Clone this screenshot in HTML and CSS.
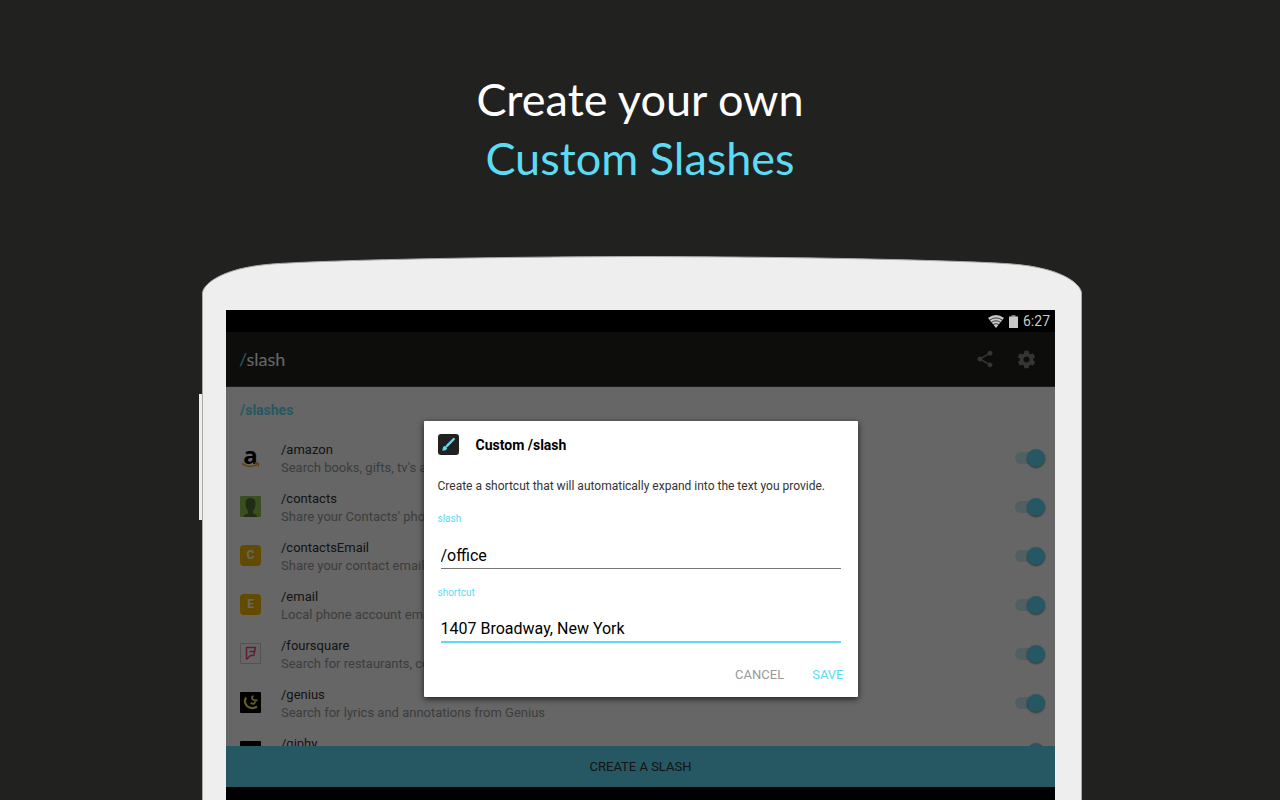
FILE: index.html
```html
<!DOCTYPE html>
<html lang="en">
<head>
  <meta charset="UTF-8">
  <meta name="viewport" content="width=device-width, initial-scale=1.0">
  <title>/slash - Custom Slashes</title>
  <link rel="stylesheet" href="styles.css">
</head>
<body>
  <h1>Create your own<br><span class="accent">Custom Slashes</span></h1>

  <div class="tablet">
    <div class="side-button"></div>
    <svg class="tablet-top" viewBox="0 0 880 54" preserveAspectRatio="none">
      <path fill="#eee" stroke="#aaa" d="M0.5 55V37C1 29 18 12 70 8C110 5 250 1 440 0.5C630 1 770 5 810 8C862 12 879 29 879.5 37V55"/>
    </svg>

    <div class="tablet-body">
    <div class="screen">
      <div class="status-bar">
        <svg width="16" height="13" viewBox="0 0 16 13">
          <path fill="#c8c8c8" d="M0 3Q8-3 16 3L8 13Z"/>
          <path fill="none" stroke="#000" stroke-width=".7" d="M1.5 5.2Q8 .6 14.5 5.2M3.3 7.5Q8 4 12.7 7.5M5 9.6Q8 7.6 11 9.6"/>
        </svg>
        <svg width="9" height="13" viewBox="0 0 9 13">
          <path fill="#777" d="M2.5 0h4v2h-4z"/>
          <path fill="#c8c8c8" d="M0 1.5h9V13H0z"/>
        </svg>
        <span>6:27</span>
      </div>

      <div class="app">
        <header class="app-bar">
          <h2><span class="accent">/</span>slash</h2>
          <button class="icon-button" aria-label="Share">
            <svg width="20" height="20" viewBox="0 0 24 24"><path fill="#858585" d="M18 16.08c-.76 0-1.44.3-1.96.77L8.91 12.7c.05-.23.09-.46.09-.7s-.04-.47-.09-.7l7.05-4.11c.54.5 1.25.81 2.04.81 1.66 0 3-1.34 3-3s-1.34-3-3-3-3 1.34-3 3c0 .24.04.47.09.7L8.04 9.81C7.5 9.31 6.79 9 6 9c-1.66 0-3 1.34-3 3s1.34 3 3 3c.79 0 1.5-.31 2.04-.81l7.12 4.16c-.05.21-.08.43-.08.65 0 1.61 1.31 2.92 2.92 2.92s2.92-1.31 2.92-2.92-1.31-2.92-2.92-2.92z"/></svg>
          </button>
          <button class="icon-button" aria-label="Settings">
            <svg width="21" height="21" viewBox="0 0 24 24"><path fill="#858585" d="M19.43 12.98c.04-.32.07-.64.07-.98s-.03-.66-.07-.98l2.11-1.65c.19-.15.24-.42.12-.64l-2-3.46c-.12-.22-.39-.3-.61-.22l-2.49 1c-.52-.4-1.08-.73-1.69-.98l-.38-2.65C14.46 2.18 14.25 2 14 2h-4c-.25 0-.46.18-.49.42l-.38 2.65c-.61.25-1.17.59-1.69.98l-2.49-1c-.23-.09-.49 0-.61.22l-2 3.46c-.13.22-.07.49.12.64l2.11 1.65c-.04.32-.07.65-.07.98s.03.66.07.98l-2.11 1.65c-.19.15-.24.42-.12.64l2 3.46c.12.22.39.3.61.22l2.49-1c.52.4 1.08.73 1.69.98l.38 2.65c.03.24.24.42.49.42h4c.25 0 .46-.18.49-.42l.38-2.65c.61-.25 1.17-.59 1.69-.98l2.49 1c.23.09.49 0 .61-.22l2-3.46c.12-.22.07-.49-.12-.64l-2.11-1.65zM12 15.5c-1.93 0-3.5-1.57-3.5-3.5s1.57-3.5 3.5-3.5 3.5 1.57 3.5 3.5-1.57 3.5-3.5 3.5z"/></svg>
          </button>
        </header>

        <main class="list">
          <h3>/slashes</h3>
          <label class="row">
            <span class="icon amazon">a<svg width="19" height="6" viewBox="0 0 19 6"><path fill="none" stroke="#f90" stroke-width="1.5" d="M1 1.5Q8 7 16 2.5M13.5 1.2Q19 0 17 4.5"/></svg></span>
            <span class="text"><b>/amazon</b><small>Search books, gifts, tv's and more</small></span>
            <input type="checkbox" checked>
          </label>
          <label class="row">
            <span class="icon contacts"><svg width="21" height="21" viewBox="0 0 21 21"><path fill="#536e36" d="M3.5 21Q4 18.500 8 17.500V15Q5.500 12 5.500 7.500Q5.500 2 10.500 2T15.500 7.500Q15.500 12 13 15V17.500Q17 18.500 17.500 21Z"/></svg></span>
            <span class="text"><b>/contacts</b><small>Share your Contacts' phone</small></span>
            <input type="checkbox" checked>
          </label>
          <label class="row">
            <span class="icon letter">C</span>
            <span class="text"><b>/contactsEmail</b><small>Share your contact emails</small></span>
            <input type="checkbox" checked>
          </label>
          <label class="row">
            <span class="icon letter">E</span>
            <span class="text"><b>/email</b><small>Local phone account emails</small></span>
            <input type="checkbox" checked>
          </label>
          <label class="row">
            <span class="icon foursquare"><svg width="19" height="19" viewBox="0 0 19 19"><path fill="none" stroke="#f0487f" stroke-width="1.5" stroke-linejoin="round" d="M5.500 15.500V3.500H14.500L12.800 11.500H9.500L5.500 15.500M8.500 7.500H13.500"/></svg></span>
            <span class="text"><b>/foursquare</b><small>Search for restaurants, coffee</small></span>
            <input type="checkbox" checked>
          </label>
          <label class="row">
            <span class="icon genius"><svg width="21" height="21" viewBox="0 0 21 21"><path fill="none" stroke="#f0ee60" stroke-width="2.2" d="M6 5.500Q3.500 10 7 14Q11.500 18 17 14.500"/><path fill="none" stroke="#f0ee60" stroke-width="1.8" d="M13.500 3.800Q11 5 12.500 7.200Q14 8.800 17.500 8.200M10.800 10.800Q14 13.500 15.500 9.500"/></svg></span>
            <span class="text"><b>/genius</b><small>Search for lyrics and annotations from Genius</small></span>
            <input type="checkbox" checked>
          </label>
          <label class="row">
            <span class="icon giphy"></span>
            <span class="text"><b>/giphy</b><small>Search for gifs</small></span>
            <input type="checkbox" checked>
          </label>
        </main>

        <button class="create">CREATE A SLASH</button>

        <div class="overlay">
          <form class="dialog">
            <div class="dialog-title">
              <svg width="21" height="21" viewBox="0 0 21 21">
                <rect width="21" height="21" rx="3" fill="#212120"/>
                <path stroke="#5cdcf4" stroke-width="2.400" stroke-linecap="round" d="M9 11.800L15.800 5"/>
                <path fill="#5cdcf4" d="M6.500 12Q8.800 12 9 14.200Q8.500 17 3.800 16.500Q5 15.500 4.800 14Q5 12.300 6.500 12Z"/>
              </svg>
              <h4>Custom /slash</h4>
            </div>
            <p>Create a shortcut that will automatically expand into the text you provide.</p>
            <label for="slash">slash</label>
            <input type="text" id="slash" value="/office">
            <label for="shortcut">shortcut</label>
            <input type="text" id="shortcut" class="active" value="1407 Broadway, New York">
            <div class="actions">
              <button type="button">CANCEL</button>
              <button type="button" class="save">SAVE</button>
            </div>
          </form>
        </div>
      </div>
    </div>
    </div>
  </div>
</body>
</html>
```
FILE: styles.css
```css
* {
  box-sizing: border-box;
}
body {
  font-family: Roboto, sans-serif;
  background-color: #212120;
  margin: 0;
  height: 100vh;
  overflow: hidden;
  display: flex;
  flex-direction: column;
  align-items: center;
}
h1, h2, h3, h4, p {
  margin: 0;
}
button {
  font-family: inherit;
  background: none;
  border: none;
  padding: 0;
  cursor: pointer;
}
svg {
  display: block;
}
h1 {
  font-family: Lato, sans-serif;
  font-size: 45px;
  font-weight: 400;
  line-height: 59px;
  color: white;
  text-align: center;
  padding: 70px 0 68px;
}
.accent {
  color: #5cdcf4;
}

/* tablet */
.tablet {
  position: relative;
  width: 92%;
  max-width: 880px;
  margin-left: 4px;
  flex: 1;
  min-height: 0;
  display: flex;
  flex-direction: column;
}
.tablet-top {
  width: 100%;
  height: 54px;
}
.side-button {
  position: absolute;
  left: -3px;
  top: 138px;
  width: 3px;
  height: 126px;
  background-color: #eee;
}
.tablet-body {
  flex: 1;
  min-height: 0;
  display: flex;
  flex-direction: column;
  padding: 0 26px 0 23px;
  background-color: #eee;
  border: 0 solid #aaa;
  border-width: 0 1px;
}
.screen {
  flex: 1;
  min-height: 0;
  display: flex;
  flex-direction: column;
  background-color: black;
  padding-bottom: 13px;
}
.status-bar {
  height: 22px;
  display: flex;
  align-items: center;
  justify-content: flex-end;
  gap: 5px;
  padding-right: 5px;
  font-size: 14px;
  color: #c8c8c8;
}
.app {
  position: relative;
  flex: 1;
  min-height: 0;
  display: flex;
  flex-direction: column;
  background-color: white;
}
.app-bar {
  height: 55px;
  display: flex;
  align-items: center;
  gap: 21px;
  padding: 0 18px 0 13px;
  background-color: #212120;
  border-bottom: 1px solid #444;
}
.app-bar h2 {
  flex: 1;
  font-family: Lato, sans-serif;
  font-size: 18px;
  font-weight: 400;
  color: white;
}

/* slash list */
.list {
  flex: 1;
  min-height: 0;
  overflow: hidden;
}
.list h3 {
  font-size: 14px;
  line-height: 46px;
  padding-left: 14px;
  color: #5cdcf4;
}
.row {
  height: 49px;
  display: flex;
  align-items: center;
  padding: 0 10px 0 14px;
}
.icon {
  width: 21px;
  height: 21px;
  margin-right: 20px;
  border-radius: 1px;
}
.amazon {
  display: flex;
  flex-direction: column;
  align-items: center;
  justify-content: center;
  font-family: "Open Sans", sans-serif;
  font-size: 24px;
  font-weight: 700;
  line-height: 14px;
  color: black;
}
.contacts {
  background-color: #8dc750;
}
.letter {
  border-radius: 4px;
  background-color: #f5b800;
  color: white;
  font-size: 12px;
  font-weight: 700;
  line-height: 21px;
  text-align: center;
}
.foursquare {
  border: 1px solid #ccc;
}
.genius, .giphy {
  background-color: black;
}
.text {
  flex: 1;
  display: flex;
  flex-direction: column;
  padding-top: 2px;
}
.text b, .text small {
  font-size: 13px;
  font-weight: 400;
  line-height: 18px;
  color: #333;
}
.text small {
  color: #999;
}
.row input {
  appearance: none;
  position: relative;
  width: 30px;
  height: 18px;
  margin: 0;
}
.row input::before {
  content: "";
  position: absolute;
  left: 0;
  top: 3px;
  width: 28px;
  height: 12px;
  border-radius: 6px;
  background-color: #c8eef5;
}
.row input::after {
  content: "";
  position: absolute;
  right: 0;
  top: 0;
  width: 18px;
  height: 18px;
  border-radius: 50%;
  background-color: #5cdcf4;
  box-shadow: 0 1px 2px rgba(0, 0, 0, 0.5);
}
.create {
  height: 41px;
  background-color: #5cdcf4;
  color: #333;
  font-size: 13px;
}

/* dialog */
.overlay {
  position: absolute;
  inset: 0;
  display: flex;
  align-items: center;
  justify-content: center;
  padding-bottom: 2px;
  background-color: rgba(0, 0, 0, 0.6);
}
.dialog {
  width: 94%;
  max-width: 434px;
  padding: 13px 14px 4px;
  background-color: white;
  border-radius: 1px;
  box-shadow: 0 2px 6px rgba(0, 0, 0, 0.7);
}
.dialog-title {
  display: flex;
  align-items: center;
  gap: 17px;
  height: 22px;
  margin-bottom: 21px;
}
.dialog h4 {
  font-size: 14px;
  color: black;
}
.dialog p {
  font-size: 12px;
  line-height: 18px;
  color: #333;
}
.dialog label {
  display: block;
  margin: 17px 0 13px;
  font-size: 10px;
  line-height: 14px;
  color: #5cdcf4;
}
.dialog input {
  display: block;
  width: calc(100% - 6px);
  height: 30px;
  margin: 0 3px;
  padding: 4px 0 0;
  border: none;
  border-bottom: 1px solid #777;
  outline: none;
  font-family: inherit;
  font-size: 16px;
  color: black;
}
.dialog input.active {
  border-bottom: 2px solid #5cdcf4;
}
.actions {
  display: flex;
  justify-content: flex-end;
  gap: 28px;
  margin-top: 14px;
}
.actions button {
  height: 36px;
  font-size: 13px;
  color: #999;
}
.actions .save {
  color: #5cdcf4;
}
```
